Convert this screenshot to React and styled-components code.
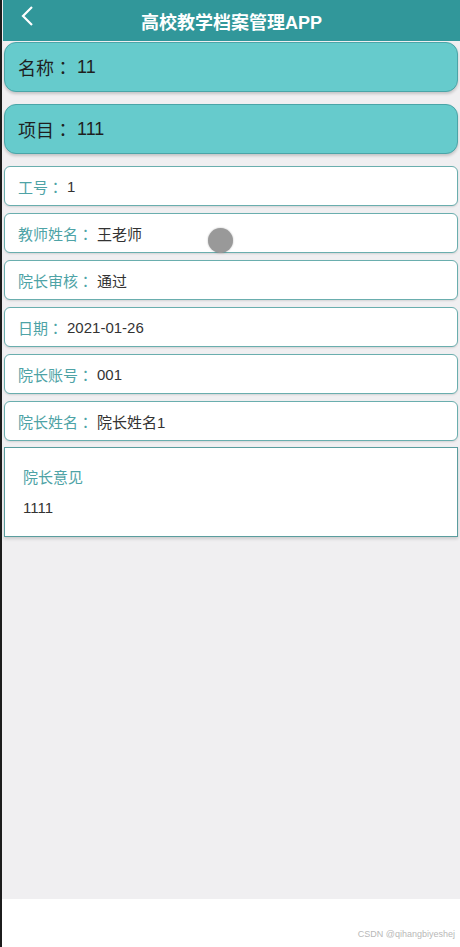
import React from "react";
import styled, { createGlobalStyle } from "styled-components";

const Global = createGlobalStyle`
  html, body { margin: 0; padding: 0; }
  body {
    font-family: "Liberation Sans", Arial, "Noto Sans CJK SC", sans-serif;
    background: #ffffff;
  }
`;

const Page = styled.div`
  position: relative;
  width: 460px;
  height: 947px;
  box-sizing: border-box;
  border-left: 2px solid #1c1c1c;
  display: flex;
  flex-direction: column;
  overflow: hidden;
`;

const Body = styled.div`
  background: #f0eff1;
  height: 899px;
  display: flex;
  flex-direction: column;
`;

const Header = styled.header`
  height: 41px;
  margin-left: 1px;
  background: #31979a;
  display: flex;
  align-items: center;
  justify-content: center;
  position: relative;
  color: #fff;
  font-size: 18px;
  font-weight: bold;
`;

const Back = styled.svg`
  position: absolute;
  left: 16px;
  top: 4px;
`;

const Content = styled.div`
  padding: 1px 2px 0 2px;
  display: flex;
  flex-direction: column;
`;

const BigCard = styled.div`
  height: 48px;
  margin-bottom: 12px;
  background: #66cbcc;
  border: 1px solid #4aa5a8;
  border-radius: 12px;
  box-shadow: 0 2px 3px rgba(0, 0, 0, 0.18);
  display: flex;
  align-items: center;
  padding-left: 13px;
  font-size: 18px;
  color: #1f1f1f;
`;

const Row = styled.div`
  height: 38px;
  margin-bottom: 7px;
  background: #fff;
  border: 1.5px solid #6aaeae;
  border-radius: 6px;
  box-shadow: 0 1px 2px rgba(0, 0, 0, 0.12);
  display: flex;
  align-items: center;
  padding-left: 13px;
  font-size: 15px;
`;

const Label = styled.span`
  color: #4ea3a6;
`;

const Colon = styled.span`
  font-family: "Noto Sans CJK TC", sans-serif;
  margin-right: ${(p) => p.$gap || 4}px;
`;

const Value = styled.span`
  color: #333;
`;

const Opinion = styled.div`
  margin-top: -1px;
  background: #fff;
  border: 1px solid #5a9d9e;
  box-shadow: 0 2px 3px rgba(0, 0, 0, 0.15);
  padding: 18px 18px 0;
  box-sizing: border-box;
  height: 90px;
  font-size: 15px;
`;

const OpLabel = styled.div`
  color: #4ea3a6;
  margin-bottom: 12px;
`;

const OpValue = styled.div`
  color: #333;
`;

const Footer = styled.footer`
  flex: 1;
  background: #fff;
  display: flex;
  align-items: flex-end;
  justify-content: flex-end;
  padding: 0 5px 8px 0;
  font-size: 9px;
  color: #b8b8b8;
`;

const Touch = styled.div`
  position: absolute;
  left: 206px;
  top: 228px;
  width: 25px;
  height: 25px;
  border-radius: 50%;
  background: #999;
  box-shadow: 0 0 2px rgba(0, 0, 0, 0.3);
`;

const rows = [
  ["工号", "1"],
  ["教师姓名", "王老师"],
  ["院长审核", "通过"],
  ["日期", "2021-01-26"],
  ["院长账号", "001"],
  ["院长姓名", "院长姓名1"],
];

export default function App() {
  return (
    <>
      <Global />
      <Page>
        <Body>
          <Header>
            <Back width="16" height="24" viewBox="0 0 16 24">
              <path d="M13 3 L4 12 L13 21" fill="none" stroke="#fff" strokeWidth="2.2" />
            </Back>
            高校教学档案管理APP
          </Header>
          <Content>
            <BigCard>名称<Colon $gap={5}>：</Colon>11</BigCard>
            <BigCard>项目<Colon $gap={5}>：</Colon>111</BigCard>
            {rows.map(([l, v]) => (
              <Row key={l}>
                <Label>{l}<Colon>：</Colon></Label>
                <Value>{v}</Value>
              </Row>
            ))}
            <Opinion>
              <OpLabel>院长意见</OpLabel>
              <OpValue>1111</OpValue>
            </Opinion>
          </Content>
        </Body>
        <Footer>CSDN @qihangbiyeshej</Footer>
        <Touch />
      </Page>
    </>
  );
}
